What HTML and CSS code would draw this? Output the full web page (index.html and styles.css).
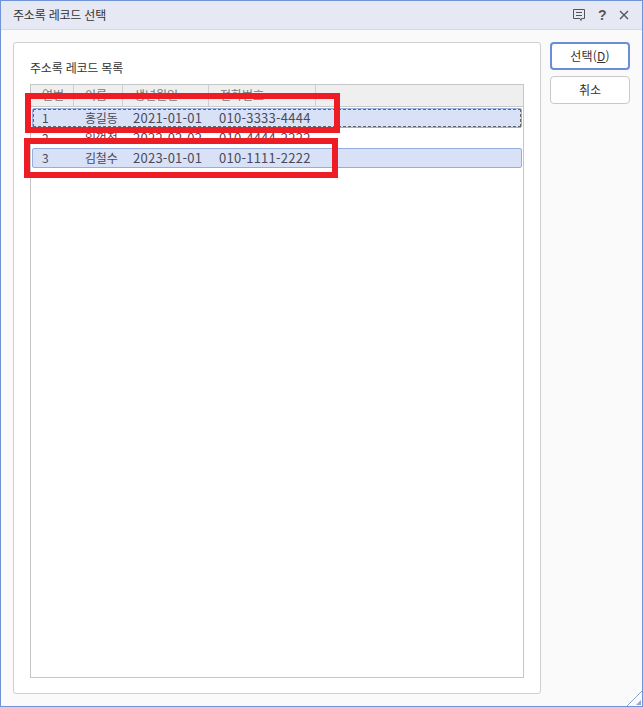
FILE: index.html
```html
<!DOCTYPE html>
<html lang="ko">
<head>
<meta charset="utf-8">
<title>주소록 레코드 선택</title>
<link rel="stylesheet" href="styles.css">
</head>
<body>
<div class="window">
  <header class="titlebar">
    <span class="title">주소록 레코드 선택</span>
    <div class="title-icons">
      <svg class="ti" width="14" height="14" viewBox="0 0 14 14"><path d="M1.5 1.5h11v9H9.5l-.5 2-1-2H1.5z" fill="none" stroke="#555" stroke-width="1"/><path d="M4 4.5h6M4 7.5h6" stroke="#555" stroke-width="1"/></svg>
      <span class="help">?</span>
      <svg class="ti" width="10" height="10" viewBox="0 0 10 10"><path d="M1 1l8 8M9 1l-8 8" stroke="#555" stroke-width="1.4"/></svg>
    </div>
  </header>
  <div class="content">
    <section class="panel">
      <div class="panel-label">주소록 레코드 목록</div>
      <div class="list">
        <div class="thead">
          <div class="th c1">연번</div>
          <div class="th c2">이름</div>
          <div class="th c3">생년월일</div>
          <div class="th c4">전화번호</div>
          <div class="th c5"></div>
        </div>
        <div class="tbody">
          <div class="row sel focus">
            <div class="td c1">1</div><div class="td c2">홍길동</div><div class="td c3">2021-01-01</div><div class="td c4">010-3333-4444</div>
          </div>
          <div class="row">
            <div class="td c1">2</div><div class="td c2">임꺽정</div><div class="td c3">2022-02-02</div><div class="td c4">010-4444-2222</div>
          </div>
          <div class="row sel">
            <div class="td c1">3</div><div class="td c2">김철수</div><div class="td c3">2023-01-01</div><div class="td c4">010-1111-2222</div>
          </div>
        </div>
      </div>
    </section>
    <aside class="actions">
      <button class="btn primary">선택(<u>D</u>)</button>
      <button class="btn">취소</button>
    </aside>
  </div>
  <div class="mark mark-a"></div>
  <div class="mark mark-b"></div>
  <svg class="grip" width="15" height="15" viewBox="0 0 15 15"><path d="M0 15L15 0" stroke="#8ea6dc" stroke-width="1" fill="none"/><path d="M14 9v5H9z" fill="#8ea6dc"/></svg>
</div>
</body>
</html>
```
FILE: styles.css
```css
* { box-sizing: border-box; }
html, body { margin: 0; padding: 0; }
body {
  width: 643px;
  height: 707px;
  overflow: hidden;
  font-family: "Noto Sans CJK KR", "Noto Sans", sans-serif;
  font-size: 12px;
  color: #333;
}
.window {
  position: relative;
  width: 643px;
  height: 707px;
  border: 1px solid #7093d8;
  background: #fafafa;
  display: flex;
  flex-direction: column;
}
.titlebar {
  height: 29px;
  flex: none;
  background: #e6e8f4;
  border-bottom: 1px solid #d6d7e8;
  display: flex;
  align-items: center;
  justify-content: space-between;
  padding: 0 13px 0 12px;
}
.title { font-size: 12px; color: #333; line-height: 26px; letter-spacing: -0.2px; }
.title-icons { display: flex; align-items: center; gap: 12px; }
.ti { display: block; }
.help { font-family: "Liberation Sans", sans-serif; font-weight: 700; font-size: 14px; color: #555; line-height: 14px; width: 9px; }
.content {
  flex: 1;
  display: flex;
  align-items: flex-start;
  padding: 12px;
  gap: 9px;
}
.panel {
  width: 528px;
  height: 652px;
  background: #fff;
  border: 1px solid #cfcfcf;
  border-radius: 3px;
  padding: 16px 16px 15px;
  display: flex;
  flex-direction: column;
}
.panel-label { height: 25px; line-height: 17px; color: #333; letter-spacing: -0.2px; }
.list {
  flex: 1;
  border: 1px solid #c6c6c6;
  background: #fff;
  display: flex;
  flex-direction: column;
}
.thead {
  height: 22px;
  flex: none;
  display: flex;
  background: #efefef;
  border-bottom: 1px solid #c9c9c9;
}
.th {
  color: #777;
  line-height: 19px;
  border-right: 1px solid #cfcfcf;
  padding-left: 11px;
}
.th.c5 { border-right: 0; }
.c1 { width: 43px; flex: none; }
.c2 { width: 49px; flex: none; }
.c3 { width: 86px; flex: none; }
.c4 { width: 107px; flex: none; }
.c5 { flex: 1; }
.tbody { padding: 1px 1px 0; display: flex; flex-direction: column; }
.row {
  height: 20px;
  display: flex;
  color: #4a4a5a;
  line-height: 17px;
  border: 1px solid transparent;
  border-radius: 2px;
  font-size: 12px;
  position: relative;
}
.row.sel { background: #d8e1f5; border-color: #96aede; }
.row.focus { outline: 1px dashed #666; outline-offset: -2px; }
.td.c1 { width: 42px; padding-left: 9px; }
.td.c2 { width: 48px; padding-left: 10px; white-space: nowrap; letter-spacing: -0.2px; }
.td.c3 { width: 86px; padding-left: 10px; white-space: nowrap; font-size: 13px; letter-spacing: 0.25px; }
.td.c4 { width: 107px; padding-left: 10px; white-space: nowrap; font-size: 13px; letter-spacing: 0.25px; }
.actions { width: 80px; display: flex; flex-direction: column; gap: 6px; }
.btn {
  width: 80px;
  height: 28px;
  background: #fff;
  border: 1px solid #c9c9c9;
  border-radius: 4px;
  font: inherit;
  color: #333;
  padding: 0 0 2px;
}
.btn.primary { border: 2px solid #6b8cd9; letter-spacing: 0.2px; }
.mark {
  position: absolute;
  border: 6px solid #ee1c25;
  pointer-events: none;
}
.mark-a { left: 24px; top: 92px; width: 315px; height: 40px; }
.mark-b { left: 23px; top: 137px; width: 314px; height: 40px; }
.grip { position: absolute; right: 0; bottom: 0; }
```
